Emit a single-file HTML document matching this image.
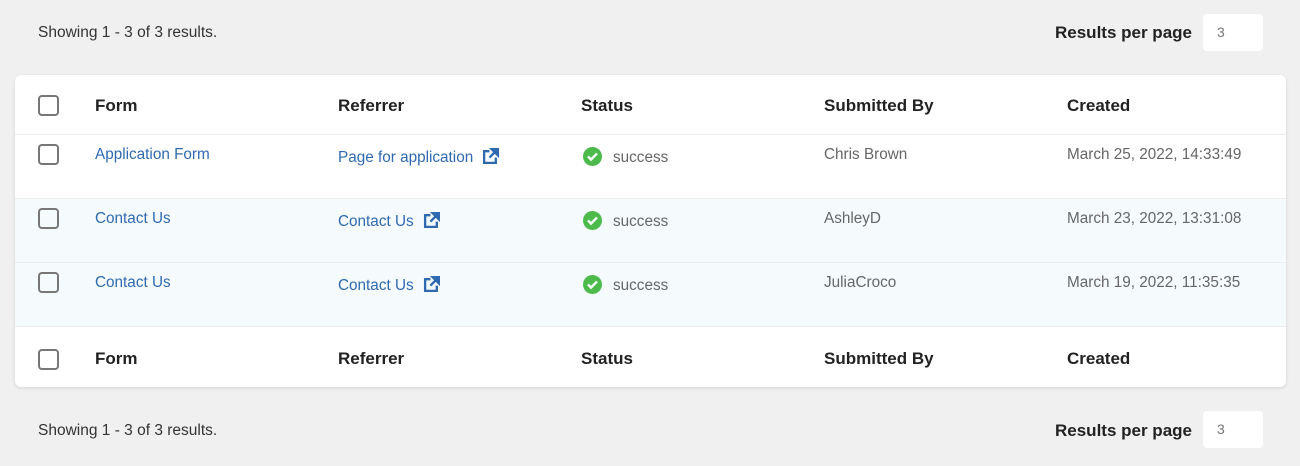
<!DOCTYPE html>
<html><head><style>
body{margin:0;width:1300px;height:466px;background:#f0f0f0;font-family:"Liberation Sans",Arial,sans-serif;position:relative;overflow:hidden}
.abs{position:absolute}
.show{left:38px;font-size:15.5px;color:#333}
.rpp{left:1055px;font-size:17px;font-weight:bold;color:#222}
.sel{left:1203px;width:60px;height:37px;background:#fff;border-radius:4px;font-size:14px;color:#777;box-sizing:border-box;padding-left:14px;line-height:37px}
.card{left:15px;top:75px;width:1271px;height:312px;background:#fff;border-radius:6px;box-shadow:0 1px 3px rgba(0,0,0,.12);overflow:hidden}
.row{position:absolute;left:0;width:1271px;border-bottom:1px solid #ececec}
.cb{position:absolute;left:23px;width:21px;height:21px;border:2px solid #777;border-radius:4px;box-sizing:border-box}
.h{position:absolute;font-size:17px;font-weight:bold;color:#222}
.t{position:absolute;font-size:15.3px}
.blue{color:#2f6ab0}.gray{color:#666}
.ok{position:absolute;width:19px;height:19px;border-radius:50%;background:#4cbb4c}
</style></head><body>
<div class="abs show" style="top:24px">Showing 1 - 3 of 3 results.</div>
<div class="abs rpp" style="top:23px">Results per page</div>
<div class="abs sel" style="top:14px">3</div>
<div class="abs card">
 <div class="row" style="top:0;height:59px">
  <div class="cb" style="top:20px"></div>
  <div class="h" style="left:80px;top:21px">Form</div><div class="h" style="left:323px;top:21px">Referrer</div>
  <div class="h" style="left:566px;top:21px">Status</div><div class="h" style="left:809px;top:21px">Submitted By</div><div class="h" style="left:1052px;top:21px">Created</div>
 </div>
 <div class="row" style="top:60px;height:63px;background:#fff">
  <div class="cb" style="top:9px"></div>
  <div class="t blue" style="left:80px;top:11px">Application Form</div>
  <div class="t blue" style="left:323px;top:13px">Page for application <svg width="17" height="17" viewBox="0 0 16 16" style="vertical-align:-3px;margin-left:5px"><path d="M7 3H2v11h11V9" fill="none" stroke="#2f6ab0" stroke-width="2.2"/><path d="M9 1h6v6z M14 2L7 9" fill="#2f6ab0" stroke="#2f6ab0" stroke-width="2.2"/></svg></div>
  <div class="ok" style="left:568px;top:12px"><svg width="19" height="19"><path d="M5 9.5l3 3 6-6" fill="none" stroke="#fff" stroke-width="2.4"/></svg></div>
  <div class="t gray" style="left:598px;top:14px">success</div>
  <div class="t gray" style="left:809px;top:11px">Chris Brown</div>
  <div class="t gray" style="left:1052px;top:11px">March 25, 2022, 14:33:49</div>
 </div>
 <div class="row" style="top:124px;height:63px;background:#f5fafd">
  <div class="cb" style="top:9px"></div>
  <div class="t blue" style="left:80px;top:11px">Contact Us</div>
  <div class="t blue" style="left:323px;top:13px">Contact Us <svg width="17" height="17" viewBox="0 0 16 16" style="vertical-align:-3px;margin-left:5px"><path d="M7 3H2v11h11V9" fill="none" stroke="#2f6ab0" stroke-width="2.2"/><path d="M9 1h6v6z M14 2L7 9" fill="#2f6ab0" stroke="#2f6ab0" stroke-width="2.2"/></svg></div>
  <div class="ok" style="left:568px;top:12px"><svg width="19" height="19"><path d="M5 9.5l3 3 6-6" fill="none" stroke="#fff" stroke-width="2.4"/></svg></div>
  <div class="t gray" style="left:598px;top:14px">success</div>
  <div class="t gray" style="left:809px;top:11px">AshleyD</div>
  <div class="t gray" style="left:1052px;top:11px">March 23, 2022, 13:31:08</div>
 </div>
 <div class="row" style="top:188px;height:63px;background:#f5fafd">
  <div class="cb" style="top:9px"></div>
  <div class="t blue" style="left:80px;top:11px">Contact Us</div>
  <div class="t blue" style="left:323px;top:13px">Contact Us <svg width="17" height="17" viewBox="0 0 16 16" style="vertical-align:-3px;margin-left:5px"><path d="M7 3H2v11h11V9" fill="none" stroke="#2f6ab0" stroke-width="2.2"/><path d="M9 1h6v6z M14 2L7 9" fill="#2f6ab0" stroke="#2f6ab0" stroke-width="2.2"/></svg></div>
  <div class="ok" style="left:568px;top:12px"><svg width="19" height="19"><path d="M5 9.5l3 3 6-6" fill="none" stroke="#fff" stroke-width="2.4"/></svg></div>
  <div class="t gray" style="left:598px;top:14px">success</div>
  <div class="t gray" style="left:809px;top:11px">JuliaCroco</div>
  <div class="t gray" style="left:1052px;top:11px">March 19, 2022, 11:35:35</div>
 </div>
 <div class="row" style="top:252px;height:60px;border:0">
  <div class="cb" style="top:22px"></div>
  <div class="h" style="left:80px;top:22px">Form</div><div class="h" style="left:323px;top:22px">Referrer</div>
  <div class="h" style="left:566px;top:22px">Status</div><div class="h" style="left:809px;top:22px">Submitted By</div><div class="h" style="left:1052px;top:22px">Created</div>
 </div>
</div>
<div class="abs show" style="top:422px">Showing 1 - 3 of 3 results.</div>
<div class="abs rpp" style="top:421px">Results per page</div>
<div class="abs sel" style="top:411px">3</div>
</body></html>
